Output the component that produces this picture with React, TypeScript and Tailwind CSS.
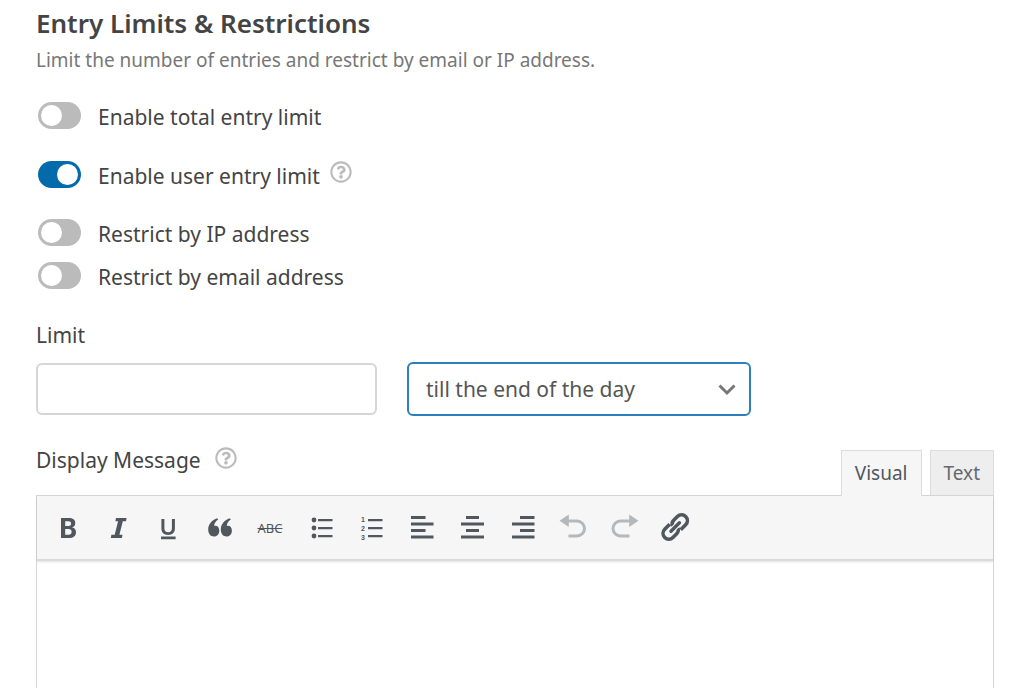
import { useState } from 'react'
import type { ReactNode } from 'react'
import { FaRegQuestionCircle } from 'react-icons/fa'

function HelpTip({ label }: { label: string }) {
  return (
    <button type="button" aria-label={label} className="mb-1 text-[22px] text-[#bbbbbb]">
      <FaRegQuestionCircle />
    </button>
  )
}

function Toggle({ id, label, on, children }: { id: string; label: string; on?: boolean; children?: ReactNode }) {
  return (
    <div className="flex h-7 items-center">
      <input
        id={id}
        type="checkbox"
        defaultChecked={on}
        className="h-[27px] w-[43px] shrink-0 cursor-pointer appearance-none rounded-full bg-[#bbbbbb] p-[3px] before:block before:size-[21px] before:rounded-full before:bg-white checked:bg-[#036aab] checked:before:ml-4"
      />
      <label htmlFor={id} className="ml-[17px] mr-[10px] pt-[3px] text-[21px] leading-7">
        {label}
      </label>
      {children}
    </div>
  )
}

function ToolButton({ label, disabled, children }: { label: string; disabled?: boolean; children: ReactNode }) {
  return (
    <button
      type="button"
      aria-label={label}
      disabled={disabled}
      className="flex size-[38px] items-center justify-center text-[#50575e] disabled:text-[#b4b8bb]"
    >
      {children}
    </button>
  )
}

function Icon({ children }: { children: ReactNode }) {
  return (
    <svg viewBox="0 0 38 38" className="size-[38px]" fill="currentColor" aria-hidden="true">
      {children}
    </svg>
  )
}

function Toolbar() {
  return (
    <div className="border-b-2 border-[#d9dadb] bg-[#f6f6f7] px-3 pb-3 pt-[13px] shadow-[0_1px_2px_rgba(0,0,0,0.12)]">
      <div className="flex max-w-[644px] justify-between">
        <ToolButton label="Bold">
          <Icon>
            <path
              fillRule="evenodd"
              d="M12 9h7.6c4.4 0 6.7 1.7 6.7 5.1 0 2.3-1.2 3.9-3.2 4.4 2.5.5 3.9 2.2 3.9 4.7 0 3.7-2.7 5.8-7.2 5.8H12zm4.2 3.2v4.9h3.1c1.9 0 2.8-.8 2.8-2.5s-1-2.4-2.9-2.4zm0 7.9v5.6h3.4c2 0 3-1 3-2.9 0-1.8-1-2.7-3.1-2.7z"
            />
          </Icon>
        </ToolButton>
        <ToolButton label="Italic">
          <Icon>
            <path d="M16 9h10.6l-.6 3.2h-3.2L19.4 25.800h3.100l-.6 3.200H10.800l.6-3.200h3.300L18.100 12.200h-2.700z" />
          </Icon>
        </ToolButton>
        <ToolButton label="Underline">
          <Icon>
            <path d="M11.400 10h3v9.300c0 2.600 1.300 4 3.700 4s3.800-1.400 3.800-4V10h3v9.500c0 4-2.600 6.400-6.800 6.400s-6.700-2.400-6.700-6.400zM11 27.400h14.600v2.900H11z" />
          </Icon>
        </ToolButton>
        <ToolButton label="Blockquote">
          <Icon>
            <path d="M15.900 9.200l1.400 1.300c-2.600 1.700-4.100 3.900-4.100 6.400.4-.1.7-.1 1.100-.1 2.400 0 4 2 4 4.900 0 3.300-2.200 5.800-5.200 5.800-3.700 0-5.900-2.800-5.900-7 0-4.900 3-9 8.700-11.300zM28.500 9.200l1.400 1.300c-2.600 1.700-4.100 3.900-4.100 6.400.4-.1.7-.1 1.100-.1 2.400 0 4 2 4 4.900 0 3.300-2.200 5.800-5.200 5.800-3.700 0-5.900-2.800-5.900-7 0-4.900 3-9 8.700-11.300z" />
          </Icon>
        </ToolButton>
        <ToolButton label="Strikethrough">
          <span className="text-[13px] leading-none line-through">ABC</span>
        </ToolButton>
        <ToolButton label="Bulleted list">
          <Icon>
            <circle cx="12" cy="11" r="2.400" />
            <circle cx="12" cy="19" r="2.400" />
            <circle cx="12" cy="27" r="2.400" />
            <path d="M16 10h14.500v2.200H16zM16 18h14.500v2.200H16zM16 26h14.500v2.200H16z" />
          </Icon>
        </ToolButton>
        <ToolButton label="Numbered list">
          <Icon>
            <g className="font-['Liberation_Sans',sans-serif] text-[7px] font-bold">
              <text x="9" y="13">1</text>
              <text x="9" y="22">2</text>
              <text x="9" y="31">3</text>
            </g>
            <path d="M16 10h14.500v2.200H16zM16 18h14.500v2.200H16zM16 26h14.500v2.200H16z" />
          </Icon>
        </ToolButton>
        <ToolButton label="Align left">
          <Icon>
            <path d="M8 7h14.500v3H8zM8 13.500h22.500v3H8zM8 20h14.500v3H8zM8 26.500h22.500v3H8z" />
          </Icon>
        </ToolButton>
        <ToolButton label="Align center">
          <Icon>
            <path d="M13 7h13v3H13zM8 13.500h23v3H8zM13 20h13v3H13zM8 26.500h23v3H8z" />
          </Icon>
        </ToolButton>
        <ToolButton label="Align right">
          <Icon>
            <path d="M16 7h14.500v3H16zM8 13.500h22.500v3H8zM16 20h14.500v3H16zM8 26.500h22.500v3H8z" />
          </Icon>
        </ToolButton>
        <ToolButton label="Undo" disabled>
          <Icon>
            <path d="M5.500 11.700l9.300-6.200v12.500z" />
            <path d="M14 12h9a7.500 7.500 0 0 1 0 15h-8.500" fill="none" stroke="currentColor" strokeWidth="3" />
          </Icon>
        </ToolButton>
        <ToolButton label="Redo" disabled>
          <Icon>
            <path d="M33.500 11.700l-9.300-6.200v12.500z" />
            <path d="M25 12h-9.500a7.500 7.500 0 0 0 0 15h9" fill="none" stroke="currentColor" strokeWidth="3" />
          </Icon>
        </ToolButton>
        <ToolButton label="Insert link">
          <Icon>
            <g transform="translate(20.200 18) rotate(-45)" fill="none" stroke="currentColor" strokeWidth="3.600">
              <path d="M-2 -5.800H-9a5.800 5.800 0 0 0 0 11.600H-4c2.600 0 4.400-1.200 5.200-3.200" />
              <path d="M2 5.800H9a5.800 5.800 0 0 0 0-11.600H4c-2.600 0-4.400 1.200-5.200 3.200" />
              <path d="M-7 0H7" stroke="#f6f6f7" strokeWidth="5.600" />
              <path d="M-6 0H6" strokeWidth="3.400" strokeLinecap="round" />
            </g>
          </Icon>
        </ToolButton>
      </div>
    </div>
  )
}

export default function App() {
  const [tab, setTab] = useState('visual')
  const tabClass = (name: string) =>
    tab === name
      ? 'relative -mb-px border border-b-0 border-[#dcdcde] bg-[#f6f6f7] px-[13px] pb-px text-[#50575e]'
      : 'border border-b-0 border-[#dcdcde] bg-[#eeeeee] px-[13px] text-[#646970]'

  return (
    <main className="flex min-h-screen flex-col bg-white pl-9 pr-[30px] pt-[5px] font-['Noto_Sans',sans-serif] text-[#444444]">
      <h2 className="text-[26px] font-semibold leading-9">Entry Limits &amp; Restrictions</h2>
      <p className="mt-[5px] text-[19px] leading-7 text-[#777777]">
        Limit the number of entries and restrict by email or IP address.
      </p>

      {/* Restriction switches */}
      <div className="mt-[27px] pl-0.5">
        <Toggle id="total-limit" label="Enable total entry limit" />
        <div className="mt-[31px]">
          <Toggle id="user-limit" label="Enable user entry limit" on>
            <HelpTip label="About the user entry limit" />
          </Toggle>
        </div>
        <div className="mt-[30px] flex flex-col gap-[15px]">
          <Toggle id="restrict-ip" label="Restrict by IP address" />
          <Toggle id="restrict-email" label="Restrict by email address" />
        </div>
      </div>

      {/* Limit and period */}
      <label htmlFor="limit" className="mt-8 text-[21px] leading-7">
        Limit
      </label>
      <div className="mt-[13px] flex items-center gap-[30px]">
        <input
          id="limit"
          type="text"
          className="h-[52px] w-[341px] rounded-md border-2 border-[#d6d6d6] px-4 text-[21px] outline-none"
        />
        <div className="relative w-[344px]">
          <select
            aria-label="Limit period"
            className="h-[54px] w-full appearance-none rounded-md border-2 border-[#2b80bd] bg-white pl-[17px] pr-12 pt-0.5 text-[21px] text-[#555555] outline-none"
          >
            <option>till the end of the day</option>
          </select>
          <svg
            viewBox="0 0 18 12"
            className="pointer-events-none absolute right-[15px] top-[22px] h-3 w-[18px]"
            fill="none"
            stroke="#777777"
            strokeWidth="3"
            aria-hidden="true"
          >
            <path d="M1.500 1.500L9 9l7.500-7.500" />
          </svg>
        </div>
      </div>

      {/* Message editor */}
      <div className="mt-[30px] flex justify-between">
        <div className="flex h-7 items-center gap-[14px]">
          <label htmlFor="message" className="text-[21px] leading-7">
            Display Message
          </label>
          <HelpTip label="About the display message" />
        </div>
        <div className="mt-1 flex h-[45px] gap-2 text-[19px]">
          <button type="button" className={tabClass('visual')} onClick={() => setTab('visual')}>
            Visual
          </button>
          <button type="button" className={tabClass('text')} onClick={() => setTab('text')}>
            Text
          </button>
        </div>
      </div>
      <div className="flex flex-1 flex-col border border-b-0 border-[#d5d6d8]">
        <Toolbar />
        <textarea id="message" className="min-h-24 w-full flex-1 resize-none p-4 text-[21px] outline-none" />
      </div>
    </main>
  )
}
